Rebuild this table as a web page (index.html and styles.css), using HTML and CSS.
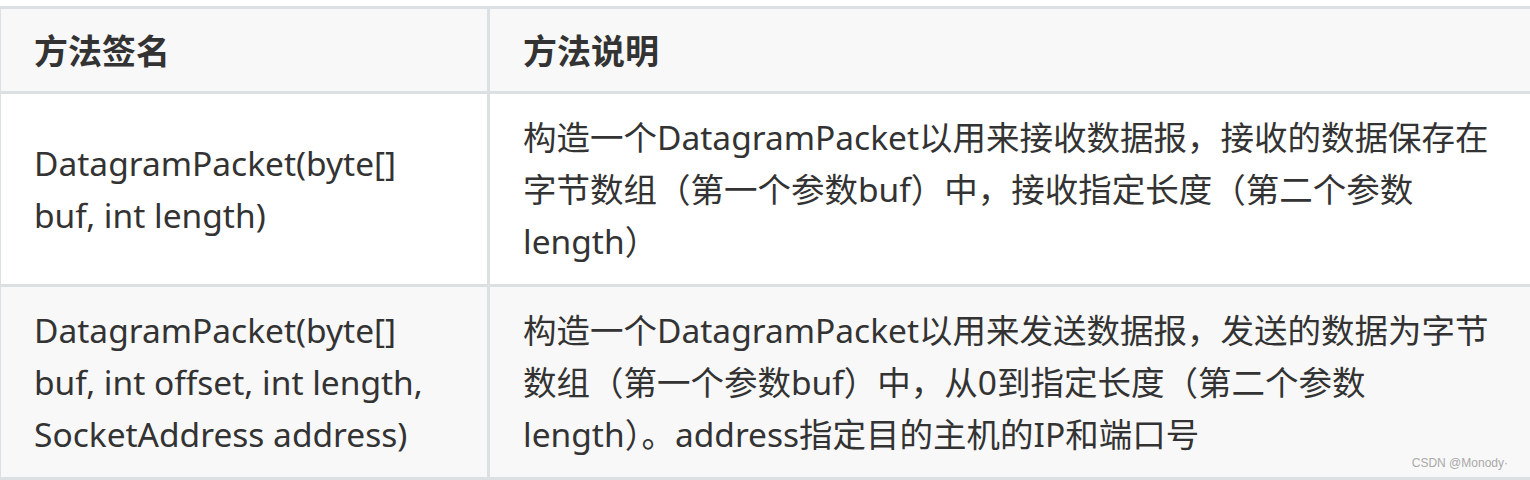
FILE: index.html
```html
<!DOCTYPE html>
<html lang="zh-CN">
<head>
<meta charset="utf-8">
<title>DatagramPacket 构造方法</title>
<link rel="stylesheet" href="styles.css">
</head>
<body>
<div class="page">
  <table class="methods">
    <colgroup>
      <col class="col-sig">
      <col class="col-desc">
    </colgroup>
    <thead>
      <tr>
        <th>方法签名</th>
        <th>方法说明</th>
      </tr>
    </thead>
    <tbody>
      <tr>
        <td>DatagramPacket(byte[]<br>buf, int length)</td>
        <td>构造一个DatagramPacket以用来接收数据报，接收的数据保存在<br>字节数组（第一个参数buf）中，接收指定长度（第二个参数<br>length）</td>
      </tr>
      <tr class="alt">
        <td>DatagramPacket(byte[]<br>buf, int offset, int length,<br>SocketAddress address)</td>
        <td>构造一个DatagramPacket以用来发送数据报，发送的数据为字节<br>数组（第一个参数buf）中，从0到指定长度（第二个参数<br>length）。address指定目的主机的IP和端口号</td>
      </tr>
    </tbody>
  </table>
  <div class="watermark">CSDN @Monody·</div>
</div>
</body>
</html>
```

FILE: styles.css
```css
html, body {
  margin: 0;
  padding: 0;
  background: #ffffff;
  overflow: hidden;
}

.page {
  position: relative;
  width: 1530px;
  height: 480px;
  overflow: hidden;
  padding-top: 6px;
  box-sizing: border-box;
}

.methods {
  border-collapse: collapse;
  table-layout: fixed;
  width: 1580px;
  margin-left: -2px;
  font-family: "Noto Sans", "Noto Sans CJK SC", sans-serif;
  font-size: 33.5px;
  line-height: 52px;
  color: #333333;
}

.col-sig {
  width: 489px;
}

.methods th,
.methods td {
  border: 3px solid #dde0e3;
  padding: 17px 33px 17px 33px;
  text-align: left;
  vertical-align: middle;
  white-space: nowrap;
}

.methods th {
  padding-top: 15px;
  padding-bottom: 15px;
  font-weight: bold;
  font-size: 34px;
  background: #f8f8f8;
  font-family: "Noto Sans CJK SC", sans-serif;
}

.methods tbody tr {
  background: #ffffff;
}

.methods tbody tr.alt {
  background: #f8f8f8;
}

.watermark {
  position: absolute;
  right: 22px;
  bottom: 10px;
  font-family: "Liberation Sans", Arial, sans-serif;
  font-size: 12px;
  color: #a9a9a9;
}
```
